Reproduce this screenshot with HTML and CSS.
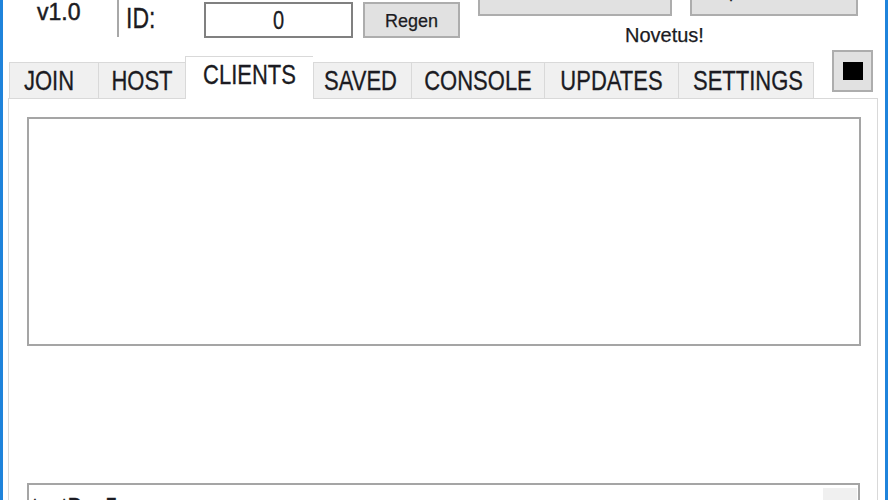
FILE: index.html
```html
<!DOCTYPE html>
<html lang="en">
<head>
    <meta charset="UTF-8">
    <title>Novetus Launcher</title>
    <link rel="stylesheet" href="styles.css">
</head>
<body>
    <div class="window">
        <div class="header">
            <div class="version">v1.0</div>
            <div class="sep"></div>
            <div class="id-label"><span class="tall">ID:</span></div>
            <div class="id-box"><span class="tall">0</span></div>
            <button class="btn regen">Regen</button>
            <div class="launch">
                <div class="launch-buttons">
                    <button class="btn big big-1">Launch</button>
                    <button class="btn big big-2">Open Studio</button>
                </div>
                <div class="brand">Novetus!</div>
            </div>
        </div>

        <div class="tabrow">
            <div class="tabs">
                <div class="tab t-join"><span class="tall">JOIN</span></div>
                <div class="tab t-host"><span class="tall">HOST</span></div>
                <div class="tab t-clients active"><span class="tall">CLIENTS</span></div>
                <div class="tab t-saved"><span class="tall">SAVED</span></div>
                <div class="tab t-console"><span class="tall">CONSOLE</span></div>
                <div class="tab t-updates"><span class="tall">UPDATES</span></div>
                <div class="tab t-settings"><span class="tall">SETTINGS</span></div>
            </div>
            <button class="btn stop"><span class="stop-icon"></span></button>
        </div>

        <div class="page">
            <div class="list"></div>
            <div class="textbox">
                <div class="textbox-text"><span class="tall">textBox5</span></div>
                <div class="scroll"></div>
            </div>
        </div>
    </div>
</body>
</html>
```

FILE: styles.css
```css
body {
    margin: 0;
    background: #fff;
    font-family: "Liberation Sans", Arial, sans-serif;
    color: #1b1b22;
    overflow: hidden;
}
.window {
    width: 888px;
    height: 500px;
    box-sizing: border-box;
    border-left: 3px solid #1f83db;
    border-right: 3px solid #1f83db;
    display: flex;
    flex-direction: column;
    overflow: hidden;
    -webkit-text-stroke: 0.25px #1b1b22;
}
.tall {
    display: inline-block;
    transform: scaleY(1.28);
}

/* top bar */
.header {
    height: 50px;
    flex-shrink: 0;
    display: flex;
    align-items: flex-start;
}
.version {
    margin-left: 34px;
    width: 46px;
    font-size: 23px;
    line-height: 24px;
    -webkit-text-stroke: 0.5px #1b1b22;
}
.sep {
    margin-left: 34px;
    width: 2px;
    height: 37px;
    background: #a8a8a8;
}
.id-label {
    margin-left: 7px;
    width: 78px;
    height: 36px;
    display: flex;
    align-items: center;
    font-size: 23px;
    line-height: 23px;
}
.id-box {
    margin-top: 2px;
    width: 149px;
    height: 36px;
    box-sizing: border-box;
    border: 2px solid #808080;
    display: flex;
    align-items: center;
    justify-content: center;
    font-size: 20px;
    line-height: 20px;
}
.btn {
    font-family: inherit;
    color: #1b1b22;
    background: #e1e1e1;
    border: 2px solid #adadad;
    margin: 0;
    padding: 0;
    box-sizing: border-box;
}
.regen {
    margin-left: 10px;
    margin-top: 2px;
    width: 97px;
    height: 36px;
    padding-top: 3px;
    font-size: 18px;
}
.launch {
    margin-left: 18px;
    display: flex;
    flex-direction: column;
}
.launch-buttons {
    display: flex;
    gap: 18px;
    margin-top: -33px;
}
.big {
    height: 49px;
    font-size: 18px;
}
.big-1 { width: 194px; }
.big-2 { width: 168px; padding-right: 18px; }
.brand {
    margin-left: 147px;
    margin-top: 9px;
    font-size: 20px;
    line-height: 20px;
}

/* tabs */
.tabrow {
    height: 48px;
    flex-shrink: 0;
    display: flex;
    align-items: flex-start;
    padding-left: 6px;
}
.tabs {
    height: 48px;
    display: flex;
    align-items: flex-end;
}
.tab {
    height: 36px;
    box-sizing: border-box;
    border-top: 1px solid #d9d9d9;
    border-left: 1px solid #d9d9d9;
    background: #f0f0f0;
    display: flex;
    align-items: center;
    justify-content: center;
    font-size: 22px;
    line-height: 22px;
}
.tab:last-child {
    border-right: 1px solid #d9d9d9;
}
.tab.active {
    height: 43px;
    margin-bottom: -1px;
    padding-bottom: 6px;
    background: #fff;
    position: relative;
    z-index: 1;
}
.t-join { width: 89px; padding-right: 10px; }
.t-host { width: 87px; }
.t-clients { width: 128px; }
.t-saved { width: 98px; padding-right: 4px; }
.t-console { width: 133px; }
.t-updates { width: 134px; }
.t-settings { width: 136px; padding-left: 4px; }
.stop {
    margin-left: 18px;
    width: 41px;
    height: 42px;
    display: flex;
    align-items: center;
    justify-content: center;
}
.stop-icon {
    width: 20px;
    height: 18px;
    background: #000;
}

/* tab page */
.page {
    margin-left: 5px;
    width: 870px;
    flex: 1;
    box-sizing: border-box;
    border: 1px solid #d9d9d9;
    padding: 18px 0 0 18px;
    display: flex;
    flex-direction: column;
}
.list {
    width: 834px;
    height: 229px;
    flex-shrink: 0;
    box-sizing: border-box;
    border: 2px solid #a5a5a5;
    background: #fff;
}
.textbox {
    margin-top: 137px;
    width: 833px;
    height: 60px;
    flex-shrink: 0;
    box-sizing: border-box;
    border: 2px solid #a5a5a5;
    display: flex;
}
.textbox-text {
    flex: 1;
    padding: 12px 0 0 3px;
    font-size: 22px;
    line-height: 22px;
}
.scroll {
    width: 34px;
    margin: 3px 1px 0 0;
    background: #f0f0f0;
}
```
